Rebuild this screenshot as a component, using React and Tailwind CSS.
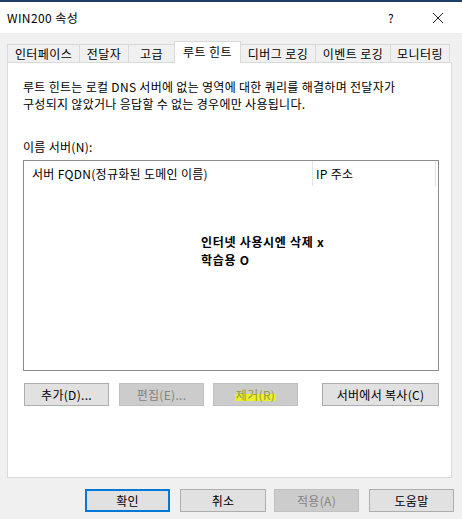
import React from "react";

const font = { fontFamily: '"Noto Sans CJK KR", "Noto Sans", sans-serif' };

function Btn({ children, w, disabled, primary }) {
  let cls = "h-[23px] flex items-center justify-center text-[12px] leading-[15px] tracking-[0.3px] ";
  if (disabled) cls += "bg-[#cccccc] border border-[#bfbfbf] text-[#838383]";
  else if (primary) cls += "bg-[#e1e1e1] border-2 border-[#0078d7] text-black";
  else cls += "bg-[#e1e1e1] border border-[#adadad] text-black";
  return (
    <div className={cls} style={{ width: w }}>
      {children}
    </div>
  );
}

export default function App() {
  const tabs = [
    { t: "인터페이스", w: 72 },
    { t: "전달자", w: 49 },
    { t: "고급", w: 46 },
    { t: "루트 힌트", w: 67, sel: true },
    { t: "디버그 로깅", w: 74 },
    { t: "이벤트 로깅", w: 75 },
    { t: "모니터링", w: 60, last: true },
  ];
  return (
    <div className="w-[462px] h-[519px] bg-[#f0f0f0] flex flex-col text-black overflow-hidden" style={font}>
      <div className="h-[2px] bg-[#1f3f68]" />
      <div className="h-[31px] bg-white flex items-center pl-[7px] text-[12px] tracking-[0.4px]">
        <span className="flex-1">WIN200 속성</span>
        <span className="w-[10px] text-center mr-[36px]">?</span>
        <svg width="12" height="12" viewBox="0 0 12 12" className="mr-[18px]">
          <path d="M1 1 L11 11 M11 1 L1 11" stroke="#222" strokeWidth="1" />
        </svg>
      </div>
      <div className="pt-[8px] px-[7px] flex flex-col">
        <div className="flex items-end h-[21px] relative z-10">
          {tabs.map((tb, i) => {
            const prevSel = i > 0 && tabs[i - 1].sel;
            if (tb.sel)
              return (
                <div
                  key={i}
                  className="h-[22px] -mb-[1px] bg-white border border-b-0 border-[#d9d9d9] flex items-center justify-center text-[12px] leading-[15px] tracking-[0.4px] pb-[2px]"
                  style={{ width: tb.w }}
                >
                  {tb.t}
                </div>
              );
            return (
              <div
                key={i}
                className={
                  "h-[18px] bg-[#f0f0f0] border-t border-[#d9d9d9] flex items-center justify-center text-[12px] leading-[15px] tracking-[0.4px] " +
                  (prevSel ? "" : "border-l ") +
                  (tb.last ? "border-r" : "")
                }
                style={{ width: tb.w }}
              >
                {tb.t}
              </div>
            );
          })}
        </div>
        <div className="w-[445px] h-[416px] bg-white border border-[#d9d9d9] flex flex-col pl-[15px] pt-[15px]">
          <div className="text-[12px] leading-[17px] tracking-[0.3px]">
            <div>루트 힌트는 로컬 DNS 서버에 없는 영역에 대한 쿼리를 해결하며 전달자가</div>
            <div>구성되지 않았거나 응답할 수 없는 경우에만 사용됩니다.</div>
          </div>
          <div className="text-[12px] leading-[17px] tracking-[0.3px] mt-[26px]">이름 서버(N):</div>
          <div className="mt-[5px] w-[416px] h-[211px] border border-[#8c8c8c] bg-white relative">
            <div className="flex h-[25px] text-[12px] leading-[15px] tracking-[0.3px]">
              <div className="w-[289px] pl-[8px] pt-[5px] border-r border-[#e5e5e5]">서버 FQDN(정규화된 도메인 이름)</div>
              <div className="w-[123px] pl-[3px] pt-[5px] border-r border-[#e5e5e5]">IP 주소</div>
            </div>
            <div className="absolute left-[177px] top-[72px] text-[12px] leading-[18px] tracking-[0.7px] font-bold">
              <div>인터넷 사용시엔 삭제 x</div>
              <div>학습용 O</div>
            </div>
          </div>
          <div className="mt-[12px] flex pl-[1px]">
            <Btn w={85}>추가(D)...</Btn>
            <div className="w-[10px]" />
            <Btn w={85} disabled>편집(E)...</Btn>
            <div className="w-[9px]" />
            <Btn w={85} disabled>
              <span className="bg-[linear-gradient(transparent_45%,#e8f028_45%,#e8f028_95%,transparent_95%)] text-[#9a9a40] px-[1px]">제거(R)</span>
            </Btn>
            <div className="w-[24px]" />
            <Btn w={117}>서버에서 복사(C)</Btn>
          </div>
        </div>
        <div className="mt-[11px] flex pl-[78px]">
          <Btn w={85} primary>확인</Btn>
          <div className="w-[10px]" />
          <Btn w={86}>취소</Btn>
          <div className="w-[8px]" />
          <Btn w={85} disabled>적용(A)</Btn>
          <div className="w-[10px]" />
          <Btn w={85}>도움말</Btn>
        </div>
      </div>
    </div>
  );
}
